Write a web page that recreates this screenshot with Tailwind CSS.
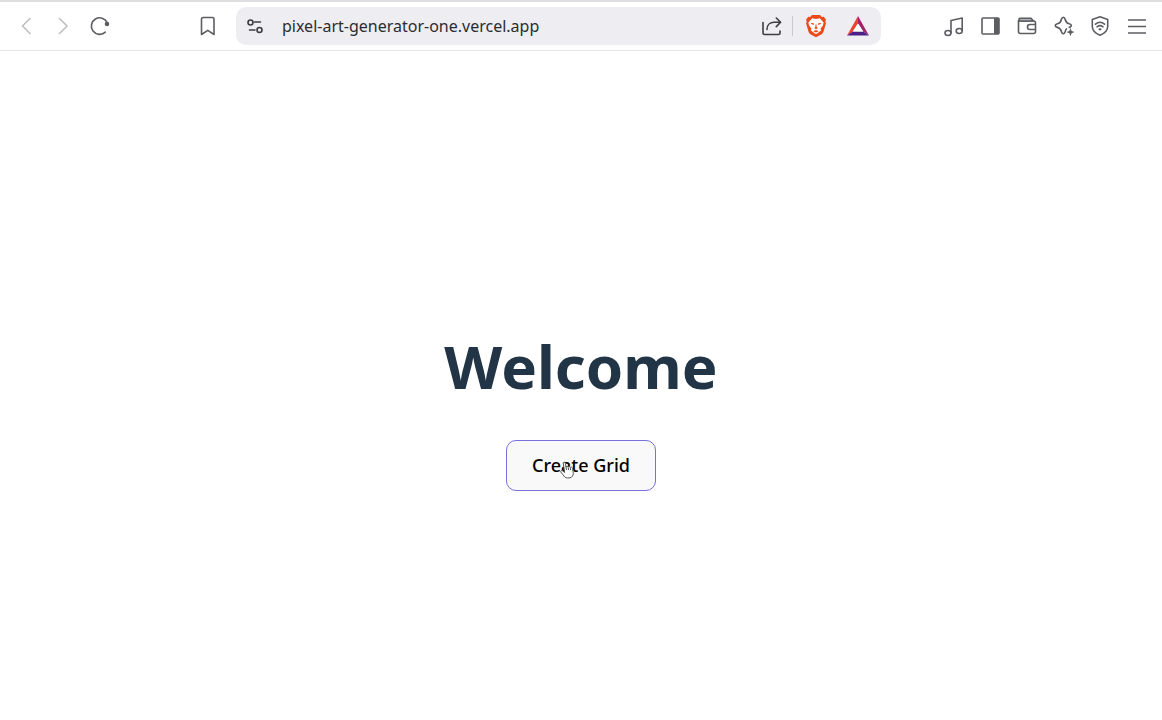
<!DOCTYPE html>
<html lang="en">
<head>
  <meta charset="UTF-8">
  <meta name="viewport" content="width=device-width, initial-scale=1.0">
  <title>Pixel Art Generator</title>
  <script src="https://cdn.jsdelivr.net/npm/@tailwindcss/browser@4"></script>
</head>
<body class="flex min-h-screen flex-col bg-white font-['Noto_Sans',sans-serif]">

  <!-- Browser toolbar -->
  <header class="flex h-[51px] items-center border-t-2 border-b border-t-[#dedee0] border-b-[#e6e6e9] pr-[13px] pl-[15px] text-[#5c5d61]">
    <nav class="flex w-[97px] justify-between">
      <button aria-label="Back" class="size-6 text-[#bdbdc0]">
        <svg viewBox="0 0 24 24" class="size-6" fill="none" stroke="currentColor" stroke-width="1.5"><path d="M15.5 4 7.500 12l8 8"/></svg>
      </button>
      <button aria-label="Forward" class="size-6 text-[#bdbdc0]">
        <svg viewBox="0 0 24 24" class="size-6" fill="none" stroke="currentColor" stroke-width="1.5"><path d="m7 4 8 8-8 8"/></svg>
      </button>
      <button aria-label="Reload" class="size-6">
        <svg viewBox="0 0 24 24" class="size-6" fill="none" stroke="currentColor" stroke-width="1.6" stroke-linecap="round"><path d="M17.300 18.200A8.300 8.300 0 1 1 19.200 8.600"/><circle cx="19" cy="10" r="2.300" fill="currentColor" stroke="none"/></svg>
      </button>
    </nav>

    <button aria-label="Bookmark" class="ml-[84px] size-6">
      <svg viewBox="0 0 24 24" class="size-6" fill="none" stroke="currentColor" stroke-width="1.6" stroke-linejoin="round"><path d="M7 3.500h9.500a1.500 1.500 0 0 1 1.500 1.500v15.500l-6.200-4.200-6.300 4.200V5A1.500 1.500 0 0 1 7 3.500Z"/></svg>
    </button>

    <!-- Address bar -->
    <div class="ml-4 flex h-[38px] min-w-0 flex-1 items-center rounded-[10px] bg-[#eeedf2] pr-[11px] pl-[9px] text-[#3c3d42]">
      <button aria-label="Site settings" class="size-5 shrink-0">
        <svg viewBox="0 0 20 20" class="size-5" fill="none" stroke="currentColor" stroke-width="1.6" stroke-linecap="round"><circle cx="5.500" cy="6.500" r="2.500"/><path d="M9.500 6H15.500M4.500 14H10"/><circle cx="14.500" cy="14" r="2.500"/></svg>
      </button>
      <input type="text" aria-label="Address" value="pixel-art-generator-one.vercel.app" class="ml-[17px] min-w-0 flex-1 bg-transparent text-base text-[#2b2c30] outline-none">
      <button aria-label="Share" class="size-6 shrink-0">
        <svg viewBox="0 0 24 24" class="size-6" fill="none" stroke="currentColor" stroke-width="1.6" stroke-linecap="round" stroke-linejoin="round"><path d="M3 8.500v10.500a1.500 1.500 0 0 0 1.500 1.500h14a1.500 1.500 0 0 0 1.500-1.500v-2M7 15.500c0-5 3.500-7.200 7-7.200h6M16.300 4l4.300 4.300-4.300 4.300"/></svg>
      </button>
      <span class="ml-2 h-5 w-px bg-[#c9c8ce]"></span>
      <button aria-label="Brave Shields" class="ml-[11px] size-6 shrink-0">
        <svg viewBox="0 0 24 24" class="size-6">
          <path fill="#ec4a18" d="M8 1h8l1.800 2 2-.2 2.200 2.900-.7 1.800.6 2.100-2.500 8.500-1.300 1.900L12 23.200 5.900 20l-1.300-1.900L2.100 9.600l.6-2.100L2 5.700l2.200-2.900 2 .2Z"/>
          <path fill="#fff" d="m8.200 4.300 3.800.7 3.800-.7 3.800 4.100-.7 3.200-2.300 3 .5 2L12 20.200l-5.100-3.600.5-2-2.300-3-.7-3.200Z"/>
          <path fill="#ec4a18" d="m6.600 8.800 3.700.7-.4 1.200-2.300-.4Zm10.800 0-3.700.7.4 1.200 2.300-.4ZM11.500 10.500h1l.2 2.700 1.200.9-1.900 1.200-1.900-1.200 1.200-.9Zm-2.300 6.700L12 16l2.800 1.200-2.800 1.300Z"/>
        </svg>
      </button>
      <button aria-label="Brave Rewards" class="ml-[18px] size-6 shrink-0">
        <svg viewBox="0 0 24 24" class="size-6">
          <path fill="#ee432d" d="M12 2v7.500L6.800 17.500 1 21.500Z"/>
          <path fill="#a3236b" d="M12 2v7.500l5.200 8 5.800 4Z"/>
          <path fill="#4c1e87" d="m1 21.500 5.800-4h10.400l5.800 4Z"/>
          <path fill="#fff" d="m12 9.500 5.200 8H6.800Z"/>
        </svg>
      </button>
    </div>

    <div class="ml-[61px] flex w-[207px] justify-between">
      <button aria-label="Playlist" class="size-6">
        <svg viewBox="0 0 24 24" class="size-6" fill="none" stroke="currentColor" stroke-width="1.6" stroke-linejoin="round"><ellipse cx="6" cy="19" rx="3" ry="2.500"/><ellipse cx="17.200" cy="17" rx="3" ry="2.500"/><path d="M9 19V6.500l11.200-2.500v13"/></svg>
      </button>
      <button aria-label="Sidebar" class="size-6">
        <svg viewBox="0 0 24 24" class="size-6" fill="none" stroke="currentColor" stroke-width="1.6"><rect x="3" y="4" width="17" height="16" rx="1"/><path fill="currentColor" stroke="none" d="M15 4h5v16h-5z"/></svg>
      </button>
      <button aria-label="Wallet" class="size-6">
        <svg viewBox="0 0 24 24" class="size-6" fill="none" stroke="currentColor" stroke-width="1.6" stroke-linejoin="round"><path d="M3.500 6.500v11A2 2 0 0 0 5.500 19.500h13a2 2 0 0 0 2-2V9a2 2 0 0 0-2-2h-14Z"/><path fill="#b4b5b8" d="M4 7V5.200a1 1 0 0 1 1-1h11L18.500 7Z"/><path d="M20.500 10.500H15a2.500 2.500 0 0 0 0 5h5.500"/></svg>
      </button>
      <button aria-label="Leo AI" class="size-6">
        <svg viewBox="0 0 24 24" class="size-6" fill="none" stroke="currentColor" stroke-width="1.6" stroke-linejoin="round" stroke-linecap="round"><path d="M14.500 14.900c-.7.500-1 1.200-1.300 2.600-.8 3-3.100 3-3.800 0-.6-2.700-1.200-3.400-4-4.100-2.900-.7-2.900-3 0-3.700 2.800-.7 3.400-1.400 4-4.200.7-3 3-3 3.800 0 .6 2.800 1.200 3.500 4 4.200 2.900.7 2.900 3 0 3.700"/><path fill="currentColor" stroke="none" d="m18.500 14 1.100 3 3 1.100-3 1.100-1.100 3-1.100-3-3-1.100 3-1.100Z"/></svg>
      </button>
      <button aria-label="VPN" class="size-6">
        <svg viewBox="0 0 24 24" class="size-6" fill="none" stroke="currentColor" stroke-width="1.6" stroke-linecap="round" stroke-linejoin="round"><path d="m12 2.800 7.700 2.600v7.100c0 4.300-3.500 7-7.700 8.800-4.200-1.800-7.700-4.500-7.700-8.800V5.400Z"/><path d="M7.500 10.200c2.700-2.300 6.300-2.300 9 0M9 12.800c1.800-1.500 4.200-1.500 6 0"/><ellipse cx="12" cy="15.300" rx="1.600" ry="1.100" fill="currentColor" stroke="none"/></svg>
      </button>
      <button aria-label="Menu" class="size-6">
        <svg viewBox="0 0 24 24" class="size-6" fill="none" stroke="currentColor" stroke-width="1.6"><path d="M3 6h18M3 12.500h18M3 19h18"/></svg>
      </button>
    </div>
  </header>

  <!-- Landing page -->
  <main class="flex flex-1 flex-col items-center justify-center pt-[52px]">
    <h1 class="text-[60px] leading-[68px] font-bold text-[#213547]">Welcome</h1>
    <div class="relative mt-10">
      <button class="rounded-[10px] border border-[#7a70dd] bg-[#f9f9f9] px-[25px] py-3 text-[18px] leading-[25px] font-medium text-black">Create Grid</button>
      <!-- Hand pointer -->
      <svg viewBox="0 0 14 18" class="pointer-events-none absolute top-[21px] left-[54px] h-[18px] w-[14px]" fill="#fff" stroke="#555" stroke-width="1" stroke-linejoin="round"><path d="M4.500 10 3.300 2.500c-.2-1.500 1.700-1.700 2-.2L6 6c.2-1 2-1 2.200.2.300-1 2-.8 2.100.4.400-.8 2-.6 2.200.6l.8 5c.2 2-1.300 4.300-3.300 4.600l-2.500.2c-2 0-3.300-1.500-4.500-3.200L.800 11c-.6-1 .8-2 1.700-1.200l2 1.700Z"/><path d="m6 6 .5 3M8.200 6.500l.4 2.500M10.300 7l.3 2"/></svg>
    </div>
  </main>

</body>
</html>
